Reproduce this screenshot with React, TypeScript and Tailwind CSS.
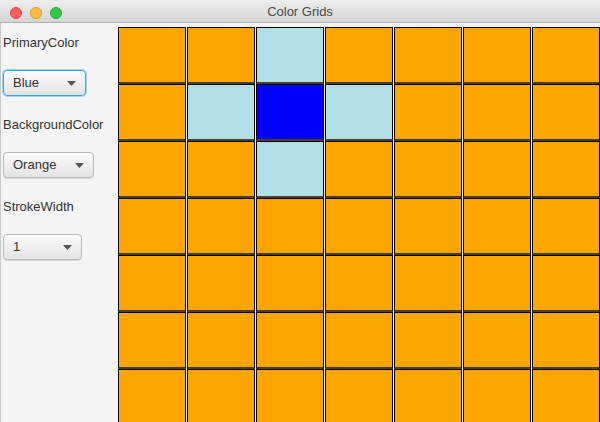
import React from "react";

const ROWS = 7;
const COLS = 7;

// primary cell at (1,2); its neighbours get the light tint
const cellColor = (r: number, c: number) => {
  if (r === 1 && c === 2) return "bg-[#0000ff]";
  if (Math.abs(r - 1) + Math.abs(c - 2) === 1) return "bg-[#b0e0e6]";
  return "bg-[#ffa500]";
};

const Combo = ({
  value,
  width,
  focused,
}: {
  value: string;
  width: string;
  focused?: boolean;
}) => (
  <div
    className={`flex h-[26px] items-center justify-between rounded-[4px] bg-gradient-to-b from-[#fbfbfb] to-[#e3e3e3] pl-[9px] pr-[9px] text-[13px] text-[#333] ${width} ${
      focused
        ? "border-[1.5px] border-[#3aa6dd] shadow-[0_0_0_1px_#9fd3ef]"
        : "border border-[#b9b9b9] shadow-[0_1px_0_#d8d8d8]"
    }`}
  >
    <span>{value}</span>
    <svg width="9" height="5" viewBox="0 0 9 5">
      <path d="M0 0h9L4.5 5z" fill="#555" />
    </svg>
  </div>
);

const Field = ({ label, children }: { label: string; children: React.ReactNode }) => (
  <div className="flex flex-col">
    <div className="mb-[19px] h-[16px] text-[13px] leading-[16px] text-[#333]">{label}</div>
    <div className="mb-[21px]">{children}</div>
  </div>
);

export default function App() {
  return (
    <div className="flex h-[422px] w-[600px] flex-col overflow-hidden bg-[#f4f4f4] font-['Liberation_Sans',sans-serif]">
      <header className="relative flex h-[23px] shrink-0 items-center border-b border-[#b1b1b1] bg-gradient-to-b from-[#ededed] to-[#d5d5d5]">
        <div className="absolute left-[10px] top-[7px] flex gap-[8px]">
          <span className="h-[12px] w-[12px] rounded-full border border-[#e2463f] bg-[#fc605c]" />
          <span className="h-[12px] w-[12px] rounded-full border border-[#dfa023] bg-[#fdbc40]" />
          <span className="h-[12px] w-[12px] rounded-full border border-[#27a836] bg-[#34c84a]" />
        </div>
        <div className="w-full pt-[2px] text-center text-[13px] text-[#4a4a4a]">Color Grids</div>
      </header>
      <div className="flex min-h-0 flex-1">
        <aside className="w-[118px] shrink-0 border-l border-[#c9c9c9] pl-[2px] pt-[12px]">
          <Field label="PrimaryColor">
            <Combo value="Blue" width="w-[83px]" focused />
          </Field>
          <Field label="BackgroundColor">
            <Combo value="Orange" width="w-[91px]" />
          </Field>
          <Field label="StrokeWidth">
            <Combo value="1" width="w-[79px]" />
          </Field>
        </aside>
        <main className="flex-1 pt-[4px]">
          <div className="grid grid-cols-[repeat(7,68px)] gap-x-[1px] bg-[#f4f4f4]">
            {Array.from({ length: ROWS * COLS }, (_, i) => {
              const r = Math.floor(i / COLS);
              const c = i % COLS;
              return (
                <div
                  key={i}
                  className={`h-[57px] border-x border-t border-b-2 border-x-black border-t-black border-b-[#4a3f2c] ${cellColor(r, c)}`}
                />
              );
            })}
          </div>
        </main>
      </div>
    </div>
  );
}
